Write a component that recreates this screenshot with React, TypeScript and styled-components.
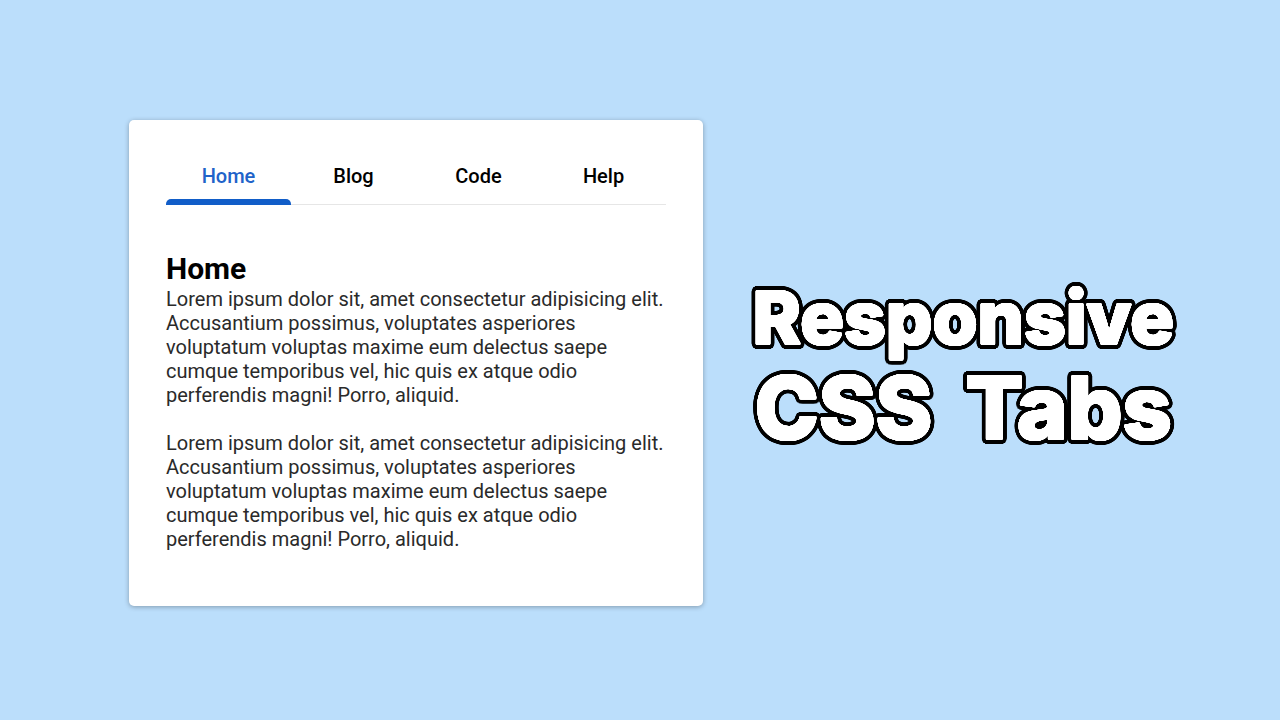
import React, { useState } from "react";
import styled, { createGlobalStyle } from "styled-components";

const GlobalStyle = createGlobalStyle`
  * { box-sizing: border-box; }
  body {
    margin: 0;
    background: #bbdefb;
    font-family: Roboto, "Liberation Sans", sans-serif;
  }
  h1, h2, p { margin: 0; }
`;

const Page = styled.main`
  min-height: 100vh;
  display: flex;
  flex-wrap: wrap;
  align-items: center;
  justify-content: space-between;
  gap: 24px;
  padding: 26px 106px 20px 129px;

  @media (max-width: 900px) {
    padding: 24px;
    justify-content: center;
  }
`;

const Card = styled.section`
  flex: 0 1 574px;
  padding: 28px 37px 55px;
  background: #fff;
  border-radius: 5px;
  box-shadow: 0 1px 5px rgba(0, 0, 0, 0.3);
`;

const TabList = styled.div`
  display: grid;
  grid-template-columns: repeat(4, 1fr);
  border-bottom: 1px solid #e6e6e6;
`;

const Tab = styled.button<{ $active: boolean }>`
  position: relative;
  height: 56px;
  padding: 0;
  border: 0;
  background: none;
  font: 500 20px/24px Roboto, "Liberation Sans", sans-serif;
  color: ${(p) => (p.$active ? "#2163c9" : "#000")};
  cursor: pointer;

  &::after {
    content: "";
    display: ${(p) => (p.$active ? "block" : "none")};
    position: absolute;
    left: 0;
    right: 0;
    bottom: -1px;
    height: 6px;
    border-radius: 5px 5px 0 0;
    background: #115dc8;
  }
`;

const Panel = styled.div`
  padding-top: 46px;
`;

const PanelTitle = styled.h2`
  font-size: 30px;
  font-weight: 700;
  line-height: 36px;
  color: #000;
`;

const Copy = styled.p`
  font-size: 20px;
  line-height: 24px;
  color: #2a2a2a;

  & + & { margin-top: 24px; }
`;

// A ring of solid shadows gives the lettering soft, rounded edges.
const ring = (radius: number, color: string) =>
  Array.from({ length: 32 }, (_, i) => {
    const a = (i / 32) * Math.PI * 2;
    return `${(Math.cos(a) * radius).toFixed(2)}px ${(Math.sin(a) * radius).toFixed(2)}px 0 ${color}`;
  }).join(", ");

const Headline = styled.h1`
  display: flex;
  flex-direction: column;
  align-items: center;
  font-family: Inter, "Open Sans", sans-serif;
  font-weight: 800;
  color: #fff;
  text-shadow: ${ring(1, "#fff")}, ${ring(3, "#000")}, ${ring(5, "#000")};
  white-space: nowrap;
`;

const HeadlineRow = styled.span<{ $size: number }>`
  font-size: ${(p) => p.$size}px;
  line-height: 90px;
`;

const LastWord = styled.span`
  margin-left: 14px;
`;

const tabs = ["Home", "Blog", "Code", "Help"];

const text =
  "Lorem ipsum dolor sit, amet consectetur adipisicing elit. Accusantium possimus, voluptates asperiores voluptatum voluptas maxime eum delectus saepe cumque temporibus vel, hic quis ex atque odio perferendis magni! Porro, aliquid.";

export default function App() {
  const [active, setActive] = useState("Home");
  return (
    <>
      <GlobalStyle />
      <Page>
        <Card>
          <TabList role="tablist">
            {tabs.map((name) => (
              <Tab
                key={name}
                id={`tab-${name}`}
                type="button"
                role="tab"
                aria-selected={name === active}
                aria-controls="panel"
                $active={name === active}
                onClick={() => setActive(name)}
              >
                {name}
              </Tab>
            ))}
          </TabList>
          <Panel id="panel" role="tabpanel" aria-labelledby={`tab-${active}`}>
            <PanelTitle>{active}</PanelTitle>
            <Copy>{text}</Copy>
            <Copy>{text}</Copy>
          </Panel>
        </Card>
        <Headline>
          <HeadlineRow $size={73}>Responsive</HeadlineRow>
          <HeadlineRow $size={86}>
            CSS <LastWord>Tabs</LastWord>
          </HeadlineRow>
        </Headline>
      </Page>
    </>
  );
}
